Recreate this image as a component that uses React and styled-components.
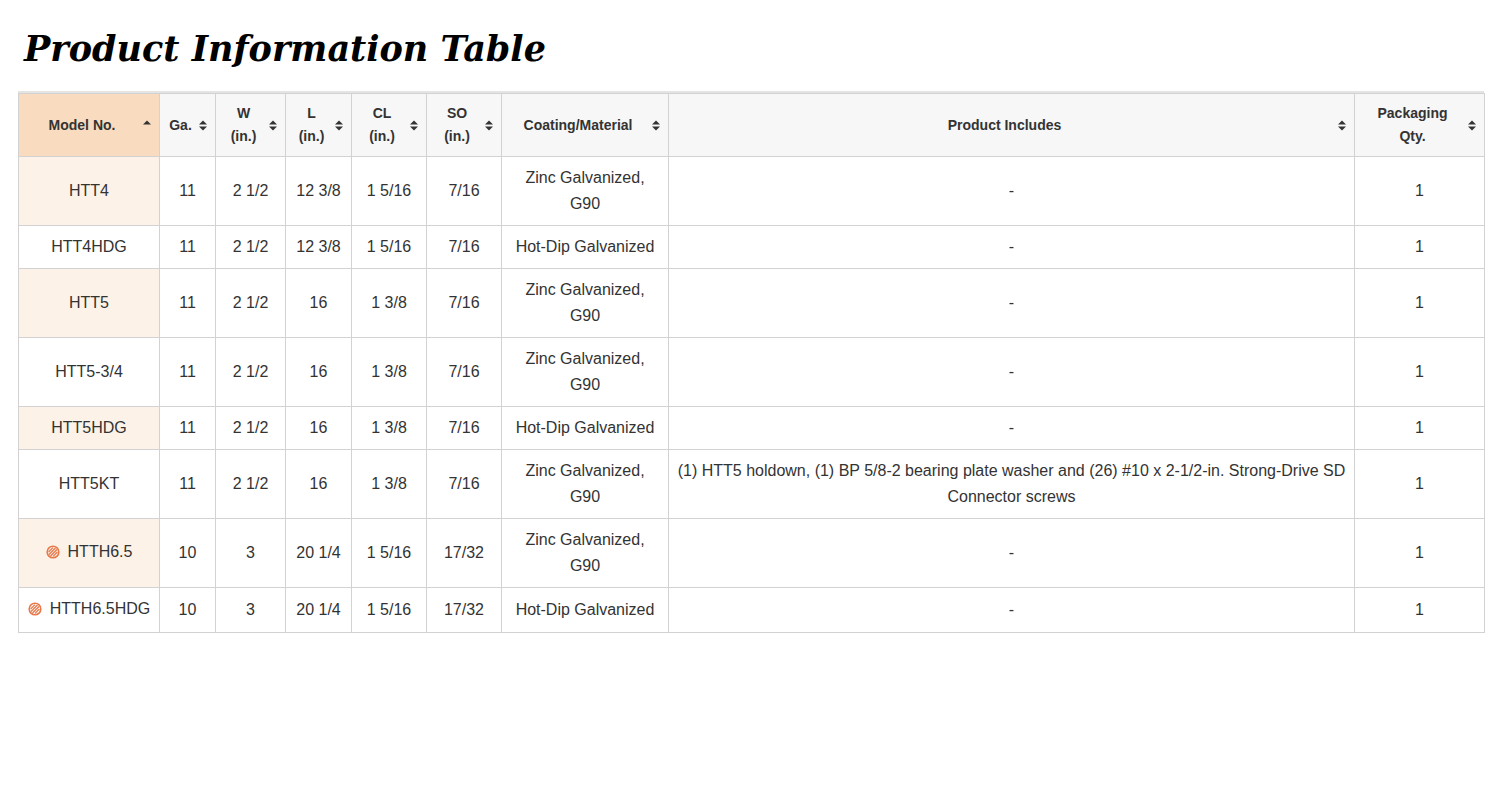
import React from "react";
import styled, { createGlobalStyle } from "styled-components";

const GlobalStyle = createGlobalStyle`
  body {
    margin: 0;
    background: #ffffff;
    font-family: "Liberation Sans", Arial, sans-serif;
  }
`;

const Page = styled.div`
  padding: 25px 16px 0 18px;
`;

const Title = styled.h1`
  margin: 0 0 19px 6px;
  font-family: "DejaVu Serif", "Liberation Serif", serif;
  font-style: italic;
  font-weight: bold;
  font-size: 35px;
  line-height: 47px;
  color: #000;
`;

const Frame = styled.div`
  width: 1466px;
  border-top: 2px solid #e4e4e4;
`;

const Table = styled.table`
  width: 1466px;
  border-collapse: collapse;
  table-layout: fixed;
  color: #333;
`;

const Th = styled.th`
  padding: 8px 8px;
  border: 1px solid #d2d2d2;
  background: ${(p) => (p.sorted ? "#f9dcbf" : "#f7f7f7")};
  font-size: 14px;
  font-weight: bold;
  line-height: 23px;
  color: #333;
`;

const HeadInner = styled.div`
  display: flex;
  align-items: center;
`;

const HeadLabel = styled.span`
  flex: 1;
  text-align: center;
`;

const Td = styled.td`
  padding: 8px 8px;
  border: 1px solid #d2d2d2;
  background: ${(p) => (p.shaded ? "#fcf2e8" : "#ffffff")};
  font-size: 16px;
  line-height: 26px;
  text-align: center;
  vertical-align: middle;
`;

const ModelWrap = styled.span`
  display: inline-flex;
  align-items: center;
  gap: 8px;
`;

function SortIcon({ up }) {
  return (
    <svg width="8" height="11" viewBox="0 0 8 11" style={{ marginLeft: 6, flexShrink: 0 }}>
      <path d="M0 4.5 L4 0.5 L8 4.5 Z" fill="#333" />
      {!up && <path d="M0 6.5 L4 10.5 L8 6.5 Z" fill="#333" />}
    </svg>
  );
}

function StampIcon() {
  return (
    <svg width="14" height="14" viewBox="0 0 14 14">
      <circle cx="7" cy="7" r="5.8" fill="none" stroke="#e8794a" strokeWidth="1.6" />
      <path d="M3 9.5 L9.5 3 M4.5 11 L11 4.5 M2.6 7 L7 2.6 M7 11.4 L11.4 7" stroke="#e8794a" strokeWidth="1.3" />
    </svg>
  );
}

const columns = [
  { label: "Model No.", width: 141, sorted: true },
  { label: "Ga.", width: 56 },
  { label: ["W", "(in.)"], width: 70 },
  { label: ["L", "(in.)"], width: 66 },
  { label: ["CL", "(in.)"], width: 75 },
  { label: ["SO", "(in.)"], width: 75 },
  { label: "Coating/Material", width: 167 },
  { label: "Product Includes", width: 686 },
  { label: ["Packaging", "Qty."], width: 130 },
];

const ZG = ["Zinc Galvanized,", "G90"];
const HDG = "Hot-Dip Galvanized";

const rows = [
  ["HTT4", "11", "2 1/2", "12 3/8", "1 5/16", "7/16", ZG, "-", "1"],
  ["HTT4HDG", "11", "2 1/2", "12 3/8", "1 5/16", "7/16", HDG, "-", "1"],
  ["HTT5", "11", "2 1/2", "16", "1 3/8", "7/16", ZG, "-", "1"],
  ["HTT5-3/4", "11", "2 1/2", "16", "1 3/8", "7/16", ZG, "-", "1"],
  ["HTT5HDG", "11", "2 1/2", "16", "1 3/8", "7/16", HDG, "-", "1"],
  [
    "HTT5KT", "11", "2 1/2", "16", "1 3/8", "7/16", ZG,
    "(1) HTT5 holdown, (1) BP 5/8-2 bearing plate washer and (26) #10 x 2-1/2-in. Strong-Drive SD Connector screws",
    "1",
  ],
  ["HTTH6.5", "10", "3", "20 1/4", "1 5/16", "17/32", ZG, "-", "1", true],
  ["HTTH6.5HDG", "10", "3", "20 1/4", "1 5/16", "17/32", HDG, "-", "1", true],
];

function Lines({ value }) {
  if (Array.isArray(value)) {
    return value.map((v, i) => (
      <React.Fragment key={i}>
        {i > 0 && <br />}
        {v}
      </React.Fragment>
    ));
  }
  return value;
}

export default function App() {
  return (
    <Page>
      <GlobalStyle />
      <Title>Product Information Table</Title>
      <Frame>
        <Table>
          <colgroup>
            {columns.map((c, i) => (
              <col key={i} style={{ width: c.width }} />
            ))}
          </colgroup>
          <thead>
            <tr>
              {columns.map((c, i) => (
                <Th key={i} sorted={c.sorted}>
                  <HeadInner>
                    <HeadLabel>
                      <Lines value={c.label} />
                    </HeadLabel>
                    <SortIcon up={c.sorted} />
                  </HeadInner>
                </Th>
              ))}
            </tr>
          </thead>
          <tbody>
            {rows.map((r, ri) => (
              <tr key={ri}>
                {r.slice(0, 9).map((cell, ci) => (
                  <Td key={ci} shaded={ci === 0 && ri % 2 === 0}>
                    {ci === 0 && r[9] ? (
                      <ModelWrap>
                        <StampIcon />
                        {cell}
                      </ModelWrap>
                    ) : (
                      <Lines value={cell} />
                    )}
                  </Td>
                ))}
              </tr>
            ))}
          </tbody>
        </Table>
      </Frame>
    </Page>
  );
}
